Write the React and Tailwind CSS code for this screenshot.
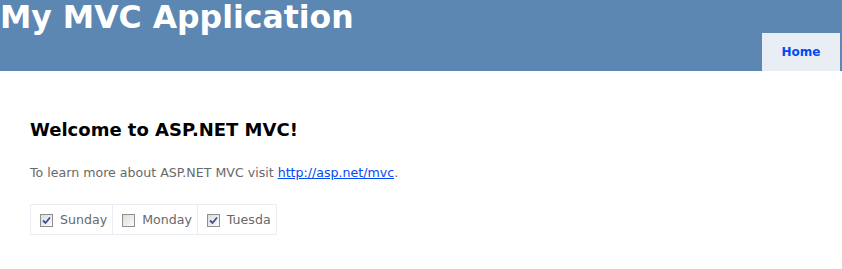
import React from 'react';

const days = [
  { name: 'Sunday', checked: true },
  { name: 'Monday', checked: false },
  { name: 'Tuesda', checked: true },
];

const Box = ({ checked }) => (
  <span className="inline-flex h-[13px] w-[13px] shrink-0 items-center justify-center border border-[#8f8f8f] bg-gradient-to-br from-[#dcdcdc] to-[#fbfbfb]">
    {checked && (
      <svg width="9" height="9" viewBox="0 0 9 9">
        <path d="M1 4.5 L3.5 7 L8 1.5" fill="none" stroke="#3d4f8f" strokeWidth="1.8" />
      </svg>
    )}
  </span>
);

const App = () => {
  return (
    <div className="min-h-[269px] bg-white font-['DejaVu_Sans',Verdana,sans-serif]">
      {/* Header */}
      <div className="flex h-[71px] items-start justify-between bg-[#5c87b2]">
        <h1 className="mt-[-3px] text-[31.5px] font-bold leading-[40px] text-white">My MVC Application</h1>
        <ul className="mr-[2px] mt-[33px] flex">
          <li className="flex h-[38px] w-[78px] items-center justify-center bg-[#e8eef4] text-[12px] font-bold text-[#034af3]">
            Home
          </li>
        </ul>
      </div>

      {/* Content */}
      <div className="px-[30px] pt-[46px]">
        <h2 className="text-[18px] font-bold leading-[26px] text-black">Welcome to ASP.NET MVC!</h2>
        <p className="mt-[21px] text-[12.6px] leading-[18px] text-[#696969]">
          To learn more about ASP.NET MVC visit{' '}
          <a href="#" className="text-[#034af3] underline">http://asp.net/mvc</a>.
        </p>
        <div className="mt-[22px] inline-flex border border-[#e8eef4]">
          {days.map((d, i) => (
            <label
              key={d.name}
              className={`flex h-[29px] items-center gap-[7px] pl-[9px] pr-[5px] pt-[1px] text-[12.6px] text-[#696969] ${i < days.length - 1 ? 'border-r border-[#e8eef4]' : ''}`}
            >
              <Box checked={d.checked} />
              {d.name}
            </label>
          ))}
        </div>
      </div>
    </div>
  );
};

export default App;
